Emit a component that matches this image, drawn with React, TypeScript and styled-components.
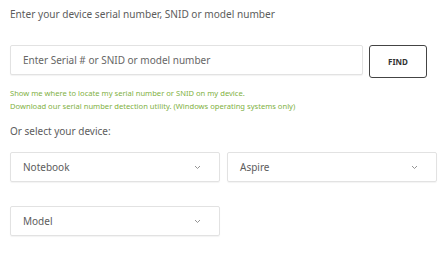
import React from "react";
import styled, { createGlobalStyle } from "styled-components";

const Global = createGlobalStyle`
  html, body { margin: 0; padding: 0; background: #fff; }
  body { font-family: "Noto Sans", "Open Sans", sans-serif; }
`;

const Page = styled.div`
  width: 448px;
  height: 256px;
  padding: 7px 10px 0 10px;
  box-sizing: border-box;
  display: flex;
  flex-direction: column;
`;

const Heading = styled.div`
  font-size: 10.1px;
  line-height: 14px;
  color: #5c5c5c;
`;

const SearchRow = styled.div`
  display: flex;
  align-items: flex-start;
  gap: 6px;
  margin-top: 24px;
`;

const Input = styled.input`
  width: 353px;
  height: 30px;
  box-sizing: border-box;
  border: 1px solid #e2e2e2;
  border-radius: 2px;
  box-shadow: 0 1px 1px rgba(0,0,0,0.05);
  padding: 0 12px;
  font-family: inherit;
  font-size: 10px;
  color: #5c5c5c;
  outline: none;
  &::placeholder { color: #666; }
`;

const FindButton = styled.button`
  width: 58px;
  height: 33px;
  box-sizing: border-box;
  border: 1.5px solid #444;
  border-radius: 3px;
  background: #fff;
  font-family: inherit;
  font-size: 8px;
  font-weight: 700;
  color: #333;
  padding: 0;
`;

const Links = styled.div`
  display: flex;
  flex-direction: column;
  margin-top: 8.5px;
`;

const GreenLink = styled.a`
  font-size: 7.6px;
  line-height: 13px;
  color: #7fb13f;
  text-decoration: none;
`;

const SubHeading = styled.div`
  font-size: 10px;
  line-height: 14px;
  color: #5c5c5c;
  margin-top: 11.5px;
`;

const SelectRow = styled.div`
  display: flex;
  gap: 7px;
  margin-top: 14px;
`;

const Select = styled.div<{ $w: number }>`
  width: ${(p) => p.$w}px;
  height: 30px;
  box-sizing: border-box;
  border: 1px solid #e2e2e2;
  border-radius: 2px;
  box-shadow: 0 1px 1px rgba(0,0,0,0.05);
  display: flex;
  align-items: center;
  justify-content: space-between;
  padding: 0 18px 0 12px;
  font-size: 10px;
  color: #5c5c5c;
`;

const ModelRow = styled.div`
  display: flex;
  margin-top: 24px;
`;

const Chevron = () => (
  <svg width="7" height="5" viewBox="0 0 7 5">
    <path d="M1 1 L3.5 3.5 L6 1" fill="none" stroke="#888" strokeWidth="0.9" />
  </svg>
);

export default function App() {
  return (
    <>
      <Global />
      <Page>
        <Heading>Enter your device serial number, SNID or model number</Heading>
        <SearchRow>
          <Input placeholder="Enter Serial # or SNID or model number" />
          <FindButton>FIND</FindButton>
        </SearchRow>
        <Links>
          <GreenLink>Show me where to locate my serial number or SNID on my device.</GreenLink>
          <GreenLink>Download our serial number detection utility. (Windows operating systems only)</GreenLink>
        </Links>
        <SubHeading>Or select your device:</SubHeading>
        <SelectRow>
          <Select $w={210}>
            <span>Notebook</span>
            <Chevron />
          </Select>
          <Select $w={210}>
            <span>Aspire</span>
            <Chevron />
          </Select>
        </SelectRow>
        <ModelRow>
          <Select $w={210}>
            <span>Model</span>
            <Chevron />
          </Select>
        </ModelRow>
      </Page>
    </>
  );
}
